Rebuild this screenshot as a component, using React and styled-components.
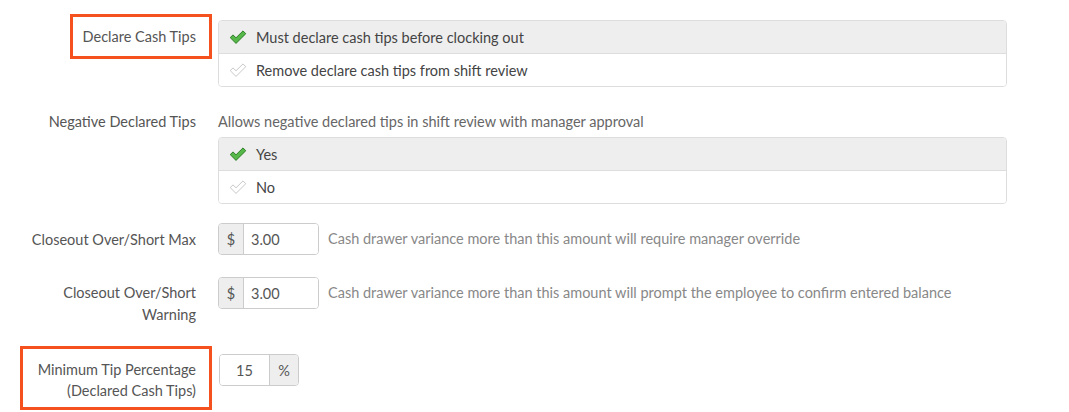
import React from 'react';
import styled, { createGlobalStyle } from 'styled-components';

const GlobalStyle = createGlobalStyle`
  body {
    margin: 0;
    background: #fff;
    font-family: Lato, "Open Sans", sans-serif;
    font-size: 14.5px;
    color: #555;
  }
`;

const Page = styled.div`
  padding: 20px 62px 0 0;
  width: 1069px;
  height: 412px;
  box-sizing: border-box;
  overflow: hidden;
`;

const Row = styled.div`
  display: grid;
  grid-template-columns: 196px 1fr;
  column-gap: 22px;
  align-items: start;
  margin-top: ${p => p.$top || 0}px;
`;

const Label = styled.div`
  position: relative;
  text-align: right;
  line-height: ${p => p.$lh || 21}px;
  padding-top: ${p => (p.$pad === undefined ? 6 : p.$pad)}px;
  color: #555;
`;

const Highlight = styled.span`
  position: absolute;
  top: ${p => p.$t}px;
  left: ${p => p.$l}px;
  right: -16px;
  bottom: ${p => p.$b}px;
  border: 3px solid #f4511e;
  pointer-events: none;
`;

const Control = styled.div`
  display: flex;
  flex-direction: column;
`;

const Description = styled.div`
  line-height: 21px;
  color: #666;
  margin-bottom: 5px;
`;

const OptionList = styled.div`
  border: 1px solid #ddd;
  border-radius: 4px;
  overflow: hidden;
`;

const Option = styled.div`
  display: flex;
  align-items: center;
  gap: 9px;
  height: 32px;
  padding-left: 10px;
  background: ${p => (p.$selected ? '#eee' : '#fff')};
  color: #444;
  & + & {
    border-top: 1px solid #ddd;
  }
`;

const Inline = styled.div`
  display: flex;
  align-items: ${p => p.$align || 'center'};
  gap: 9px;
`;

const InputGroup = styled.div`
  display: flex;
  height: 32px;
  margin-left: ${p => p.$shift || 0}px;
  border: 1px solid #ccc;
  border-radius: 4px;
  overflow: hidden;
  box-sizing: border-box;
`;

const Addon = styled.span`
  display: flex;
  align-items: center;
  justify-content: center;
  width: ${p => p.$w}px;
  background: #eee;
  color: #555;
  border-${p => p.$side}: 1px solid #ccc;
`;

const Field = styled.span`
  display: flex;
  align-items: center;
  width: ${p => p.$w}px;
  padding-left: ${p => (p.$center ? 0 : 7)}px;
  justify-content: ${p => (p.$center ? 'center' : 'flex-start')};
  background: #fff;
  color: #555;
  box-sizing: border-box;
`;

const Help = styled.span`
  color: #888;
  line-height: 32px;
`;

const Check = ({ on }) => (
  <svg width="18" height="15" viewBox="0 0 18 15">
    <path
      d="M1.2 7.6 L4 4.9 L7 7.8 L14 0.9 L16.8 3.7 L7 13.4 Z"
      fill={on ? '#56b848' : '#fff'}
      stroke={on ? '#2f7d27' : '#c8c8c8'}
      strokeWidth="1"
      strokeLinejoin="round"
    />
  </svg>
);

const Choice = ({ selected, children }) => (
  <Option $selected={selected}>
    <Check on={selected} />
    <span>{children}</span>
  </Option>
);

export default function App() {
  return (
    <>
      <GlobalStyle />
      <Page>
        <Row>
          <Label>
            Declare Cash Tips
            <Highlight $t={-6} $l={70} $b={-12} />
          </Label>
          <Control>
            <OptionList>
              <Choice selected>Must declare cash tips before clocking out</Choice>
              <Choice>Remove declare cash tips from shift review</Choice>
            </OptionList>
          </Control>
        </Row>

        <Row $top={24}>
          <Label $pad={0}>Negative Declared Tips</Label>
          <Control>
            <Description>Allows negative declared tips in shift review with manager approval</Description>
            <OptionList>
              <Choice selected>Yes</Choice>
              <Choice>No</Choice>
            </OptionList>
          </Control>
        </Row>

        <Row $top={19}>
          <Label>Closeout Over/Short Max</Label>
          <Inline>
            <InputGroup>
              <Addon $w={24} $side="right">$</Addon>
              <Field $w={74}>3.00</Field>
            </InputGroup>
            <Help>Cash drawer variance more than this amount will require manager override</Help>
          </Inline>
        </Row>

        <Row $top={22}>
          <Label $lh={22} $pad={5}>
            Closeout Over/Short
            <br />
            Warning
          </Label>
          <Inline $align="flex-start">
            <InputGroup>
              <Addon $w={24} $side="right">$</Addon>
              <Field $w={74}>3.00</Field>
            </InputGroup>
            <Help>
              Cash drawer variance more than this amount will prompt the employee to confirm entered balance
            </Help>
          </Inline>
        </Row>

        <Row $top={28}>
          <Label $pad={5}>
            Minimum Tip Percentage
            <br />
            (Declared Cash Tips)
            <Highlight $t={-8} $l={20} $b={-9} />
          </Label>
          <Inline>
            <InputGroup $shift={1}>
              <Field $w={49} $center>15</Field>
              <Addon $w={28} $side="left">%</Addon>
            </InputGroup>
          </Inline>
        </Row>
      </Page>
    </>
  );
}
